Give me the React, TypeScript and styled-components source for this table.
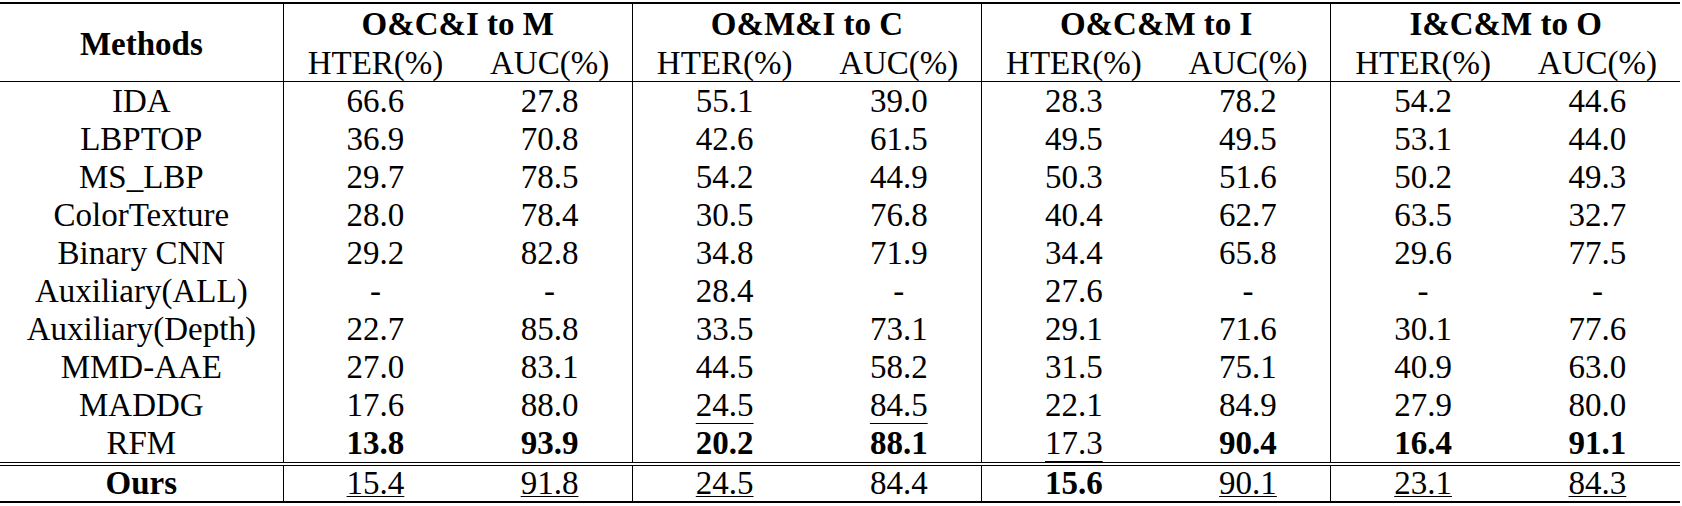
import React from "react";
import styled, { createGlobalStyle } from "styled-components";

const GlobalStyle = createGlobalStyle`
  html, body {
    margin: 0;
    padding: 0;
    background: #fff;
  }
  body {
    font-family: "Liberation Serif", "Times New Roman", serif;
    color: #000;
  }
`;

type Cell = { v: string; bold?: boolean; under?: boolean };

const groups = ["O&C&I to M", "O&M&I to C", "O&C&M to I", "I&C&M to O"];

const c = (v: string): Cell => ({ v });
const b = (v: string): Cell => ({ v, bold: true });
const u = (v: string): Cell => ({ v, under: true });

const rows: { name: string; cells: Cell[] }[] = [
  { name: "IDA", cells: [c("66.6"), c("27.8"), c("55.1"), c("39.0"), c("28.3"), c("78.2"), c("54.2"), c("44.6")] },
  { name: "LBPTOP", cells: [c("36.9"), c("70.8"), c("42.6"), c("61.5"), c("49.5"), c("49.5"), c("53.1"), c("44.0")] },
  { name: "MS_LBP", cells: [c("29.7"), c("78.5"), c("54.2"), c("44.9"), c("50.3"), c("51.6"), c("50.2"), c("49.3")] },
  { name: "ColorTexture", cells: [c("28.0"), c("78.4"), c("30.5"), c("76.8"), c("40.4"), c("62.7"), c("63.5"), c("32.7")] },
  { name: "Binary CNN", cells: [c("29.2"), c("82.8"), c("34.8"), c("71.9"), c("34.4"), c("65.8"), c("29.6"), c("77.5")] },
  { name: "Auxiliary(ALL)", cells: [c("-"), c("-"), c("28.4"), c("-"), c("27.6"), c("-"), c("-"), c("-")] },
  { name: "Auxiliary(Depth)", cells: [c("22.7"), c("85.8"), c("33.5"), c("73.1"), c("29.1"), c("71.6"), c("30.1"), c("77.6")] },
  { name: "MMD-AAE", cells: [c("27.0"), c("83.1"), c("44.5"), c("58.2"), c("31.5"), c("75.1"), c("40.9"), c("63.0")] },
  { name: "MADDG", cells: [c("17.6"), c("88.0"), u("24.5"), u("84.5"), c("22.1"), c("84.9"), c("27.9"), c("80.0")] },
  { name: "RFM", cells: [b("13.8"), b("93.9"), b("20.2"), b("88.1"), u("17.3"), b("90.4"), b("16.4"), b("91.1")] },
];

const ours: Cell[] = [u("15.4"), u("91.8"), u("24.5"), c("84.4"), b("15.6"), u("90.1"), u("23.1"), u("84.3")];

const serif = `"Liberation Serif", "Times New Roman", serif`;

const Table = styled.table`
  margin-top: 2px;
  width: 1680px;
  table-layout: fixed;
  border-collapse: collapse;
  font-family: ${serif};
  font-size: 33px;
  color: #000;
  border-top: 2px solid #000;
  border-bottom: 2px solid #000;
`;

const HeadCell = styled.th<{ $sub?: boolean; $divider?: boolean; $h: number; $pt?: number }>`
  padding: ${(p) => p.$pt ?? 0}px 0 0;
  height: ${(p) => p.$h}px;
  font-family: ${serif};
  font-size: 33px;
  line-height: ${(p) => p.$h}px;
  text-align: center;
  vertical-align: middle;
  font-weight: ${(p) => (p.$sub ? "normal" : "bold")};
  border-left: ${(p) => (p.$divider ? "1px solid #000" : "none")};
  white-space: nowrap;
`;

const HeadRow = styled.tr<{ $last?: boolean }>`
  border-bottom: ${(p) => (p.$last ? "1px solid #000" : "none")};
`;

const BodyRow = styled.tr<{ $ours?: boolean }>`
  border-top: ${(p) => (p.$ours ? "4px double #000" : "none")};
`;

const NameCell = styled.td<{ $bold?: boolean; $h: number }>`
  padding: 0;
  height: ${(p) => p.$h}px;
  font-family: ${serif};
  font-size: 33px;
  line-height: ${(p) => p.$h}px;
  text-align: center;
  white-space: nowrap;
  font-weight: ${(p) => (p.$bold ? "bold" : "normal")};
`;

const ValueCell = styled.td<{ $divider?: boolean; $bold?: boolean; $h: number }>`
  padding: 0;
  height: ${(p) => p.$h}px;
  font-family: ${serif};
  font-size: 33px;
  line-height: ${(p) => p.$h}px;
  text-align: center;
  white-space: nowrap;
  font-weight: ${(p) => (p.$bold ? "bold" : "normal")};
  border-left: ${(p) => (p.$divider ? "1px solid #000" : "none")};
`;

const Under = styled.span<{ $offset: number }>`
  text-decoration: underline;
  text-decoration-thickness: 1px;
  text-underline-offset: ${(p) => p.$offset}px;
`;

function Value({ cell, index, h, off }: { cell: Cell; index: number; h: number; off: number }) {
  return (
    <ValueCell $divider={index % 2 === 0} $bold={cell.bold} $h={h}>
      {cell.under ? <Under $offset={off}>{cell.v}</Under> : cell.v}
    </ValueCell>
  );
}

function App() {
  return (
    <>
      <GlobalStyle />
      <Table>
        <colgroup>
          <col style={{ width: 283 }} />
          {groups.map((g) => (
            <React.Fragment key={g}>
              <col style={{ width: 184 }} />
              <col style={{ width: 165 }} />
            </React.Fragment>
          ))}
        </colgroup>
        <thead>
          <HeadRow>
            <HeadCell rowSpan={2} $h={74} $pt={3}>
              Methods
            </HeadCell>
            {groups.map((g) => (
              <HeadCell key={g} colSpan={2} $divider $h={41}>
                {g}
              </HeadCell>
            ))}
          </HeadRow>
          <HeadRow $last>
            {groups.map((g) => (
              <React.Fragment key={g}>
                <HeadCell $sub $divider $h={36}>
                  HTER(%)
                </HeadCell>
                <HeadCell $sub $h={36}>
                  AUC(%)
                </HeadCell>
              </React.Fragment>
            ))}
          </HeadRow>
        </thead>
        <tbody>
          {rows.map((r) => (
            <BodyRow key={r.name}>
              <NameCell $h={38}>{r.name}</NameCell>
              {r.cells.map((cell, i) => (
                <Value key={i} cell={cell} index={i} h={38} off={7} />
              ))}
            </BodyRow>
          ))}
          <BodyRow $ours>
            <NameCell $bold $h={35}>
              Ours
            </NameCell>
            {ours.map((cell, i) => (
              <Value key={i} cell={cell} index={i} h={35} off={2} />
            ))}
          </BodyRow>
        </tbody>
      </Table>
    </>
  );
}

export default App;
